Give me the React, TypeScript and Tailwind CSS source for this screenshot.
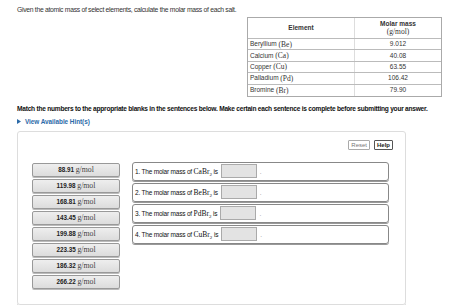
import React from "react";

const rows: [string, string, string][] = [
  ["Beryllium", "Be", "9.012"],
  ["Calcium", "Ca", "40.08"],
  ["Copper", "Cu", "63.55"],
  ["Palladium", "Pd", "106.42"],
  ["Bromine", "Br", "79.90"],
];

const chips = ["88.91", "119.98", "168.81", "143.45", "199.88", "223.35", "186.32", "266.22"];
const sentences = [
  ["1", "Ca"],
  ["2", "Be"],
  ["3", "Pd"],
  ["4", "Cu"],
];

const serif = "font-['Liberation_Serif','DejaVu_Serif',serif]";

export default function App() {
  return (
    <div className="w-[474px] h-[305px] overflow-hidden bg-white font-['Liberation_Sans',Arial,sans-serif] text-[#333]">
      <div className="pl-[17px] pt-[6px] text-[6.8px] leading-[8px] tracking-[-0.3px] text-[#333] whitespace-nowrap">
        Given the atomic mass of select elements, calculate the molar mass of each salt.
      </div>
      <div className="pl-[247px] mt-[3px]">
        <div className="w-[195px] border border-[#aaa] text-[6.5px] text-[#333]">
          <div className="flex h-[21px] border-b border-[#bbb]">
            <div className="w-[107px] border-r border-[#ddd] flex items-center justify-center font-bold">Element</div>
            <div className="flex-1 flex flex-col items-center justify-center leading-[8px]">
              <span className="font-bold">Molar mass</span>
              <span className={`${serif} text-[7.5px]`}>(g/mol)</span>
            </div>
          </div>
          {rows.map(([name, sym, m], i) => (
            <div key={name} className={`flex h-[11.4px] ${i < rows.length - 1 ? "border-b border-[#bbb]" : ""}`}>
              <div className="w-[107px] border-r border-[#ddd] flex items-center pl-[2px]">
                {name}&nbsp;<span className={`${serif} text-[7.5px]`}>({sym})</span>
              </div>
              <div className="flex-1 flex items-center justify-center">{m}</div>
            </div>
          ))}
        </div>
      </div>
      <div className="pl-[17px] mt-[8px] text-[6.6px] leading-[8px] tracking-[-0.24px] font-bold text-[#111] whitespace-nowrap">
        Match the numbers to the appropriate blanks in the sentences below. Make certain each sentence is complete before submitting your answer.
      </div>
      <div className="pl-[17px] mt-[4px] flex items-center h-[9px] text-[6.4px] tracking-[-0.05px] font-bold text-[#2c6aa8]">
        <svg width="4" height="5" viewBox="0 0 4 5" className="mr-[4px]">
          <path d="M0 0 L4 2.5 L0 5 Z" fill="#2c6aa8" />
        </svg>
        View Available Hint(s)
      </div>
      <div className="ml-[17px] mt-[5px] w-[389px] h-[174px] border border-[#ddd] rounded-[3px] shadow-[0_2px_0_#ddd]">
        <div className="flex justify-end gap-[4px] pr-[12px] pt-[8px] h-[18px]">
          <div className="h-[10px] px-[2px] border border-[#aaa] rounded-[1px] text-[6px] leading-[8px] text-[#777] bg-white">Reset</div>
          <div className="h-[10px] px-[2px] border border-[#555] rounded-[1px] text-[6px] leading-[8px] font-bold text-[#222] bg-white">Help</div>
        </div>
        <div className="flex pl-[14px] mt-[12px]">
          <div className="flex flex-col gap-[2px] w-[88px] mt-[1px]">
            {chips.map((c) => (
              <div
                key={c}
                className="h-[14px] border border-[#999] rounded-[2px] bg-gradient-to-b from-[#eeeeee] to-[#dcdcdc] flex items-center justify-center text-[6.3px] text-[#222] shadow-[0_1px_0_#bbb]"
              >
                <span className="font-bold">{c}</span>&nbsp;
                <span className={`${serif} text-[7.8px] text-[#444]`}>g/mol</span>
              </div>
            ))}
          </div>
          <div className="flex flex-col gap-[2px] ml-[12px] w-[257px]">
            {sentences.map(([n, el]) => (
              <div
                key={n}
                className="h-[19px] border border-[#888] rounded-[3px] shadow-[0_1px_0_#999] flex items-center pl-[2px] text-[6.5px] tracking-[-0.2px] text-[#111]"
              >
                <span className="whitespace-nowrap">
                  {n}. The molar mass of{" "}
                  <span className={`${serif} text-[7.5px] tracking-normal`}>
                    {el}Br<sub className="text-[5px] align-[-1px]">2</sub>
                  </span>{" "}
                  is
                </span>
                <div className="ml-[3px] w-[36px] h-[14px] border border-[#aaa] bg-[#e3e3e3]" />
                <span className="ml-[3px] text-[#999]">.</span>
              </div>
            ))}
          </div>
        </div>
      </div>
    </div>
  );
}
